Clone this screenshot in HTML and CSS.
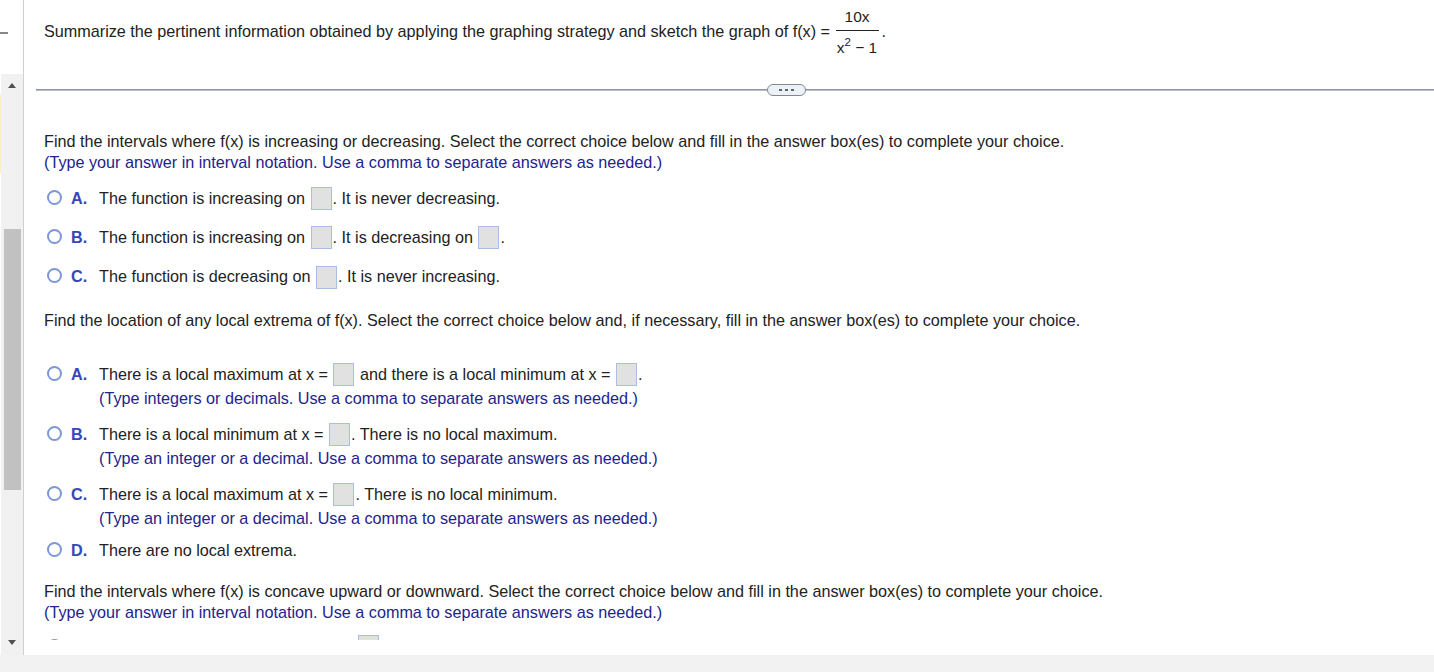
FILE: index.html
```html
<!DOCTYPE html>
<html>
<head>
<meta charset="utf-8">
<link rel="stylesheet" href="styles.css">
</head>
<body>
<div class="frame">
  <div class="side">
    <div class="side-top"><div class="dash"></div></div>
    <div class="track">
      <div class="arrow up"></div>
      <div class="thumb"></div>
      <div class="arrow down"></div>
    </div>
  </div>
  <div class="main">
    <div class="header">
      <div class="title">Summarize the pertinent information obtained by applying the graphing strategy and sketch the graph of f(x) = <span class="frac"><span class="num">10x</span><span class="den">x<sup>2</sup> − 1</span></span><span class="dot">.</span></div>
    </div>
    <div class="divider">
      <div class="line left"></div>
      <div class="pill"><span></span><span></span><span></span></div>
      <div class="line right"></div>
    </div>

    <div class="content">
      <div class="q q1">
        <div>Find the intervals where f(x) is increasing or decreasing. Select the correct choice below and fill in the answer box(es) to complete your choice.</div>
        <div class="hint">(Type your answer in interval notation. Use a comma to separate answers as needed.)</div>
      </div>
      <div class="opts opts1">
        <div class="opt"><span class="radio"></span><span class="letter">A.</span><div class="body"><div class="l1">The function is increasing on <span class="box"></span>. It is never decreasing.</div></div></div>
        <div class="opt"><span class="radio"></span><span class="letter">B.</span><div class="body"><div class="l1">The function is increasing on <span class="box"></span>. It is decreasing on <span class="box"></span>.</div></div></div>
        <div class="opt"><span class="radio"></span><span class="letter">C.</span><div class="body"><div class="l1">The function is decreasing on <span class="box"></span>. It is never increasing.</div></div></div>
      </div>

      <div class="q q2">
        <div>Find the location of any local extrema of f(x). Select the correct choice below and, if necessary, fill in the answer box(es) to complete your choice.</div>
      </div>
      <div class="opts opts2">
        <div class="opt"><span class="radio"></span><span class="letter">A.</span><div class="body"><div class="l1">There is a local maximum at x = <span class="box"></span> and there is a local minimum at x = <span class="box"></span>.</div><div class="hint sub">(Type integers or decimals. Use a comma to separate answers as needed.)</div></div></div>
        <div class="opt"><span class="radio"></span><span class="letter">B.</span><div class="body"><div class="l1">There is a local minimum at x = <span class="box"></span>. There is no local maximum.</div><div class="hint sub">(Type an integer or a decimal. Use a comma to separate answers as needed.)</div></div></div>
        <div class="opt"><span class="radio"></span><span class="letter">C.</span><div class="body"><div class="l1">There is a local maximum at x = <span class="box"></span>. There is no local minimum.</div><div class="hint sub">(Type an integer or a decimal. Use a comma to separate answers as needed.)</div></div></div>
        <div class="opt optd"><span class="radio"></span><span class="letter">D.</span><div class="body"><div class="l1">There are no local extrema.</div></div></div>
      </div>

      <div class="q q3">
        <div>Find the intervals where f(x) is concave upward or downward. Select the correct choice below and fill in the answer box(es) to complete your choice.</div>
        <div class="hint">(Type your answer in interval notation. Use a comma to separate answers as needed.)</div>
      </div>
      <div class="opts opts3">
        <div class="opt"><span class="radio"></span><div class="peek"><span class="box"></span></div></div>
      </div>
    </div>
  </div>
</div>
<div class="bottom"></div>
</body>
</html>
```
FILE: styles.css
```css
html, body {
  margin: 0;
  padding: 0;
  background: #fff;
  overflow: hidden;
}
body {
  width: 1434px;
  height: 672px;
  font-family: "Liberation Sans", Arial, sans-serif;
  font-size: 16.2px;
  color: #222;
}
.frame {
  display: flex;
  height: 655px;
}
.side {
  width: 23px;
  border-right: 1px solid #d0ccd8;
  display: flex;
  flex-direction: column;
  background: linear-gradient(to bottom, transparent 94px, #fbefc3 94px, #fbefc3 173px, transparent 173px) no-repeat 0 0 / 2px 100%;
  flex-shrink: 0;
}
.side-top {
  height: 74px;
  padding-top: 32px;
  box-sizing: border-box;
}
.dash {
  width: 8px;
  height: 2px;
  background: #888;
}
.track {
  flex: 1;
  margin-left: 1px;
  background: #f1f1f1;
  display: flex;
  flex-direction: column;
  align-items: center;
}
.arrow {
  width: 0;
  height: 0;
  border-left: 4px solid transparent;
  border-right: 4px solid transparent;
}
.arrow.up {
  margin-top: 9px;
  border-bottom: 5px solid #505050;
}
.arrow.down {
  margin-top: auto;
  margin-bottom: 10px;
  border-top: 5px solid #505050;
}
.thumb {
  margin-top: 141px;
  width: 17px;
  height: 261px;
  background: #c1c1c1;
}
.main {
  flex: 1;
  align-self: flex-start;
  height: 640px;
  overflow: hidden;
}
.header {
  height: 84px;
  padding-left: 20px;
  padding-top: 6px;
  box-sizing: border-box;
}
.title {
  white-space: nowrap;
  line-height: 51px;
}
.frac {
  display: inline-flex;
  flex-direction: column;
  align-items: center;
  vertical-align: middle;
  margin-left: 1px;
}
.num {
  padding: 0 9px 3px;
  line-height: 20px;
  border-bottom: 1px solid #222;
  font-size: 15.5px;
}
.den {
  padding-top: 7px;
  line-height: 20px;
  font-size: 15.5px;
}
.den sup {
  font-size: 11.5px;
  vertical-align: 7px;
  line-height: 0;
}
.dot {
  margin-left: 3px;
}
.divider {
  display: flex;
  align-items: center;
  height: 12px;
  margin-left: 12px;
}
.line {
  height: 1px;
  background: #8d96a3;
  border-bottom: 1px solid #b9bfc8;
}
.line.left {
  width: 731px;
}
.line.right {
  flex: 1;
}
.pill {
  width: 37px;
  height: 10px;
  border: 1px solid #7f8896;
  border-radius: 6px;
  background: #eef2f7;
  display: flex;
  align-items: center;
  justify-content: center;
  gap: 3px;
}
.pill span {
  width: 3px;
  height: 2px;
  background: #5a6473;
}
.content {
  padding-left: 20px;
}
.q {
  line-height: 21px;
}
.q1 {
  margin-top: 35px;
}
.hint {
  color: #23238e;
}
.opt {
  display: flex;
  align-items: flex-start;
  margin-bottom: 13px;
}
.opt:last-child {
  margin-bottom: 0;
}
.radio {
  width: 11px;
  height: 11px;
  border: 2px solid #7d97d8;
  border-radius: 50%;
  margin: 5px 0 0 3px;
  flex-shrink: 0;
}
.letter {
  width: 28px;
  margin-left: 9px;
  font-weight: bold;
  color: #3548b6;
  line-height: 26px;
  flex-shrink: 0;
}
.l1 {
  line-height: 26px;
  white-space: nowrap;
}
.box {
  display: inline-block;
  width: 19px;
  height: 21px;
  background: #e1e1e1;
  border: 1px solid #a9bde6;
  vertical-align: middle;
  margin: 0 1px;
  position: relative;
  top: -1px;
}
.sub {
  line-height: 22px;
}
.opts1 {
  margin-top: 12px;
}
.q2 {
  margin-top: 20px;
}
.opts2 {
  margin-top: 30px;
}
.opts2 .opt {
  margin-bottom: 12px;
}
.opts2 .optd {
  margin-top: -4px;
  margin-bottom: 0;
}
.q3 {
  margin-top: 18px;
}
.opts3 {
  margin-top: 11px;
}
.peek {
  padding-left: 295px;
  height: 26px;
  display: flex;
  align-items: center;
}
.bottom {
  height: 17px;
  background: #f2f2f2;
}
```
